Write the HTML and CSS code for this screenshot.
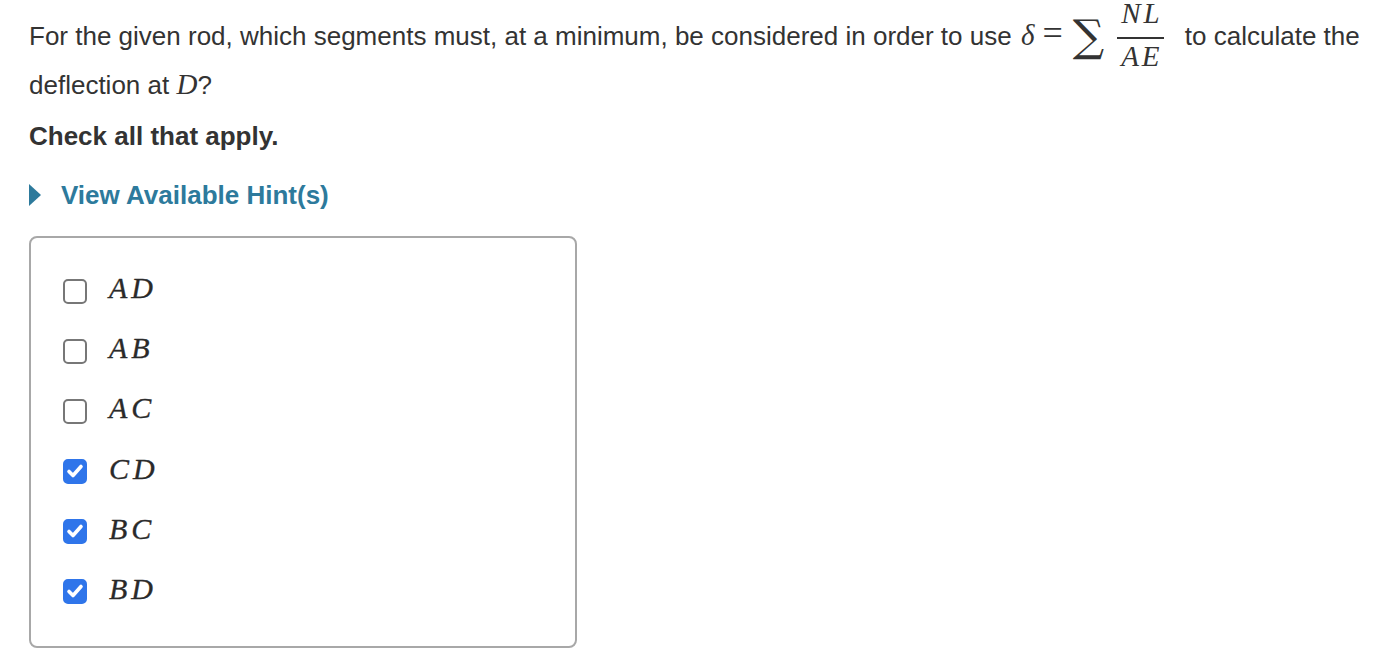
FILE: index.html
```html
<!DOCTYPE html>
<html>
<head>
<meta charset="utf-8">
<link rel="stylesheet" href="styles.css">
</head>
<body>
<div class="page">
  <p class="question">For the given rod, which segments must, at a minimum, be considered in order to use <span class="math"><span class="mi">δ</span><span class="mo">=</span><span class="sum">∑</span><span class="frac"><span class="num">NL</span><span class="den">AE</span></span></span> to calculate the deflection at <span class="mi">D</span>?</p>
  <p class="instruction">Check all that apply.</p>
  <div class="hint"><span class="tri"></span><span class="hint-text">View Available Hint(s)</span></div>
  <div class="box">
    <label class="opt"><span class="cb"></span><span class="lbl">AD</span></label>
    <label class="opt"><span class="cb"></span><span class="lbl">AB</span></label>
    <label class="opt"><span class="cb"></span><span class="lbl">AC</span></label>
    <label class="opt"><span class="cb on"><svg viewBox="0 0 24 24" width="24" height="24"><path d="M6 12.5l4 4 8-9" fill="none" stroke="#fff" stroke-width="3.6" stroke-linecap="round" stroke-linejoin="round"/></svg></span><span class="lbl">CD</span></label>
    <label class="opt"><span class="cb on"><svg viewBox="0 0 24 24" width="24" height="24"><path d="M6 12.5l4 4 8-9" fill="none" stroke="#fff" stroke-width="3.6" stroke-linecap="round" stroke-linejoin="round"/></svg></span><span class="lbl">BC</span></label>
    <label class="opt"><span class="cb on"><svg viewBox="0 0 24 24" width="24" height="24"><path d="M6 12.5l4 4 8-9" fill="none" stroke="#fff" stroke-width="3.6" stroke-linecap="round" stroke-linejoin="round"/></svg></span><span class="lbl">BD</span></label>
  </div>
</div>
</body>
</html>
```
FILE: styles.css
```css
html, body { margin: 0; padding: 0; background: #fff; }
body { font-family: "Liberation Sans", Arial, sans-serif; color: #333; overflow: hidden; }
.page { padding: 0 29px; }
.question { margin: 0; padding-top: 11px; font-size: 26px; line-height: 48px; width: 1345px; }
.math { font-family: "Liberation Serif", serif; font-size: 29px; white-space: nowrap; margin-left: 2px; }
.mi { font-family: "Liberation Serif", serif; font-style: italic; font-size: 29px; }
.mo { margin: 0 10px 0 8px; font-size: 36px; line-height: 20px; }
.sum { font-family: "DejaVu Serif", serif; font-size: 44px; line-height: 20px; vertical-align: -6px; margin-right: 9px; }
.frac { display: inline-flex; flex-direction: column; vertical-align: 22px; text-align: center; font-style: italic; font-size: 29px; line-height: 26px; letter-spacing: 3px; margin: -13px 14px -12px 4px; }
.num { border-bottom: 2px solid #333; padding: 0 1px 11px 4px; }
.den { padding: 4px 1px 0 4px; }
.instruction { margin: 0; margin-top: 12px; font-size: 26px; font-weight: bold; line-height: 30px; }
.hint { display: flex; align-items: center; margin-top: 29px; height: 30px; }
.tri { width: 0; height: 0; border-left: 12px solid #2d7a9c; border-top: 11px solid transparent; border-bottom: 11px solid transparent; margin-right: 20px; }
.hint-text { color: #2d7a9c; font-weight: bold; font-size: 26px; line-height: 30px; }
.box { margin-top: 26px; width: 548px; height: 412px; border: 2px solid #a8a8a8; border-radius: 8px; box-sizing: border-box; padding: 41px 0 0 32px; display: flex; flex-direction: column; gap: 36.2px; }
.opt { display: flex; align-items: center; height: 24px; }
.cb { width: 24px; height: 25px; box-sizing: border-box; border: 2px solid #777; border-radius: 5px; margin-right: 22px; display: flex; flex-shrink: 0; }
.cb.on { background: #2f75ea; border-color: #2f75ea; }
.cb.on svg { margin: -2px; }
.lbl { font-family: "Liberation Serif", serif; font-style: italic; font-size: 30px; line-height: 24px; letter-spacing: 4px; color: #2a2a2a; margin-bottom: 6px; -webkit-text-stroke: 0.3px #2a2a2a; }
```
